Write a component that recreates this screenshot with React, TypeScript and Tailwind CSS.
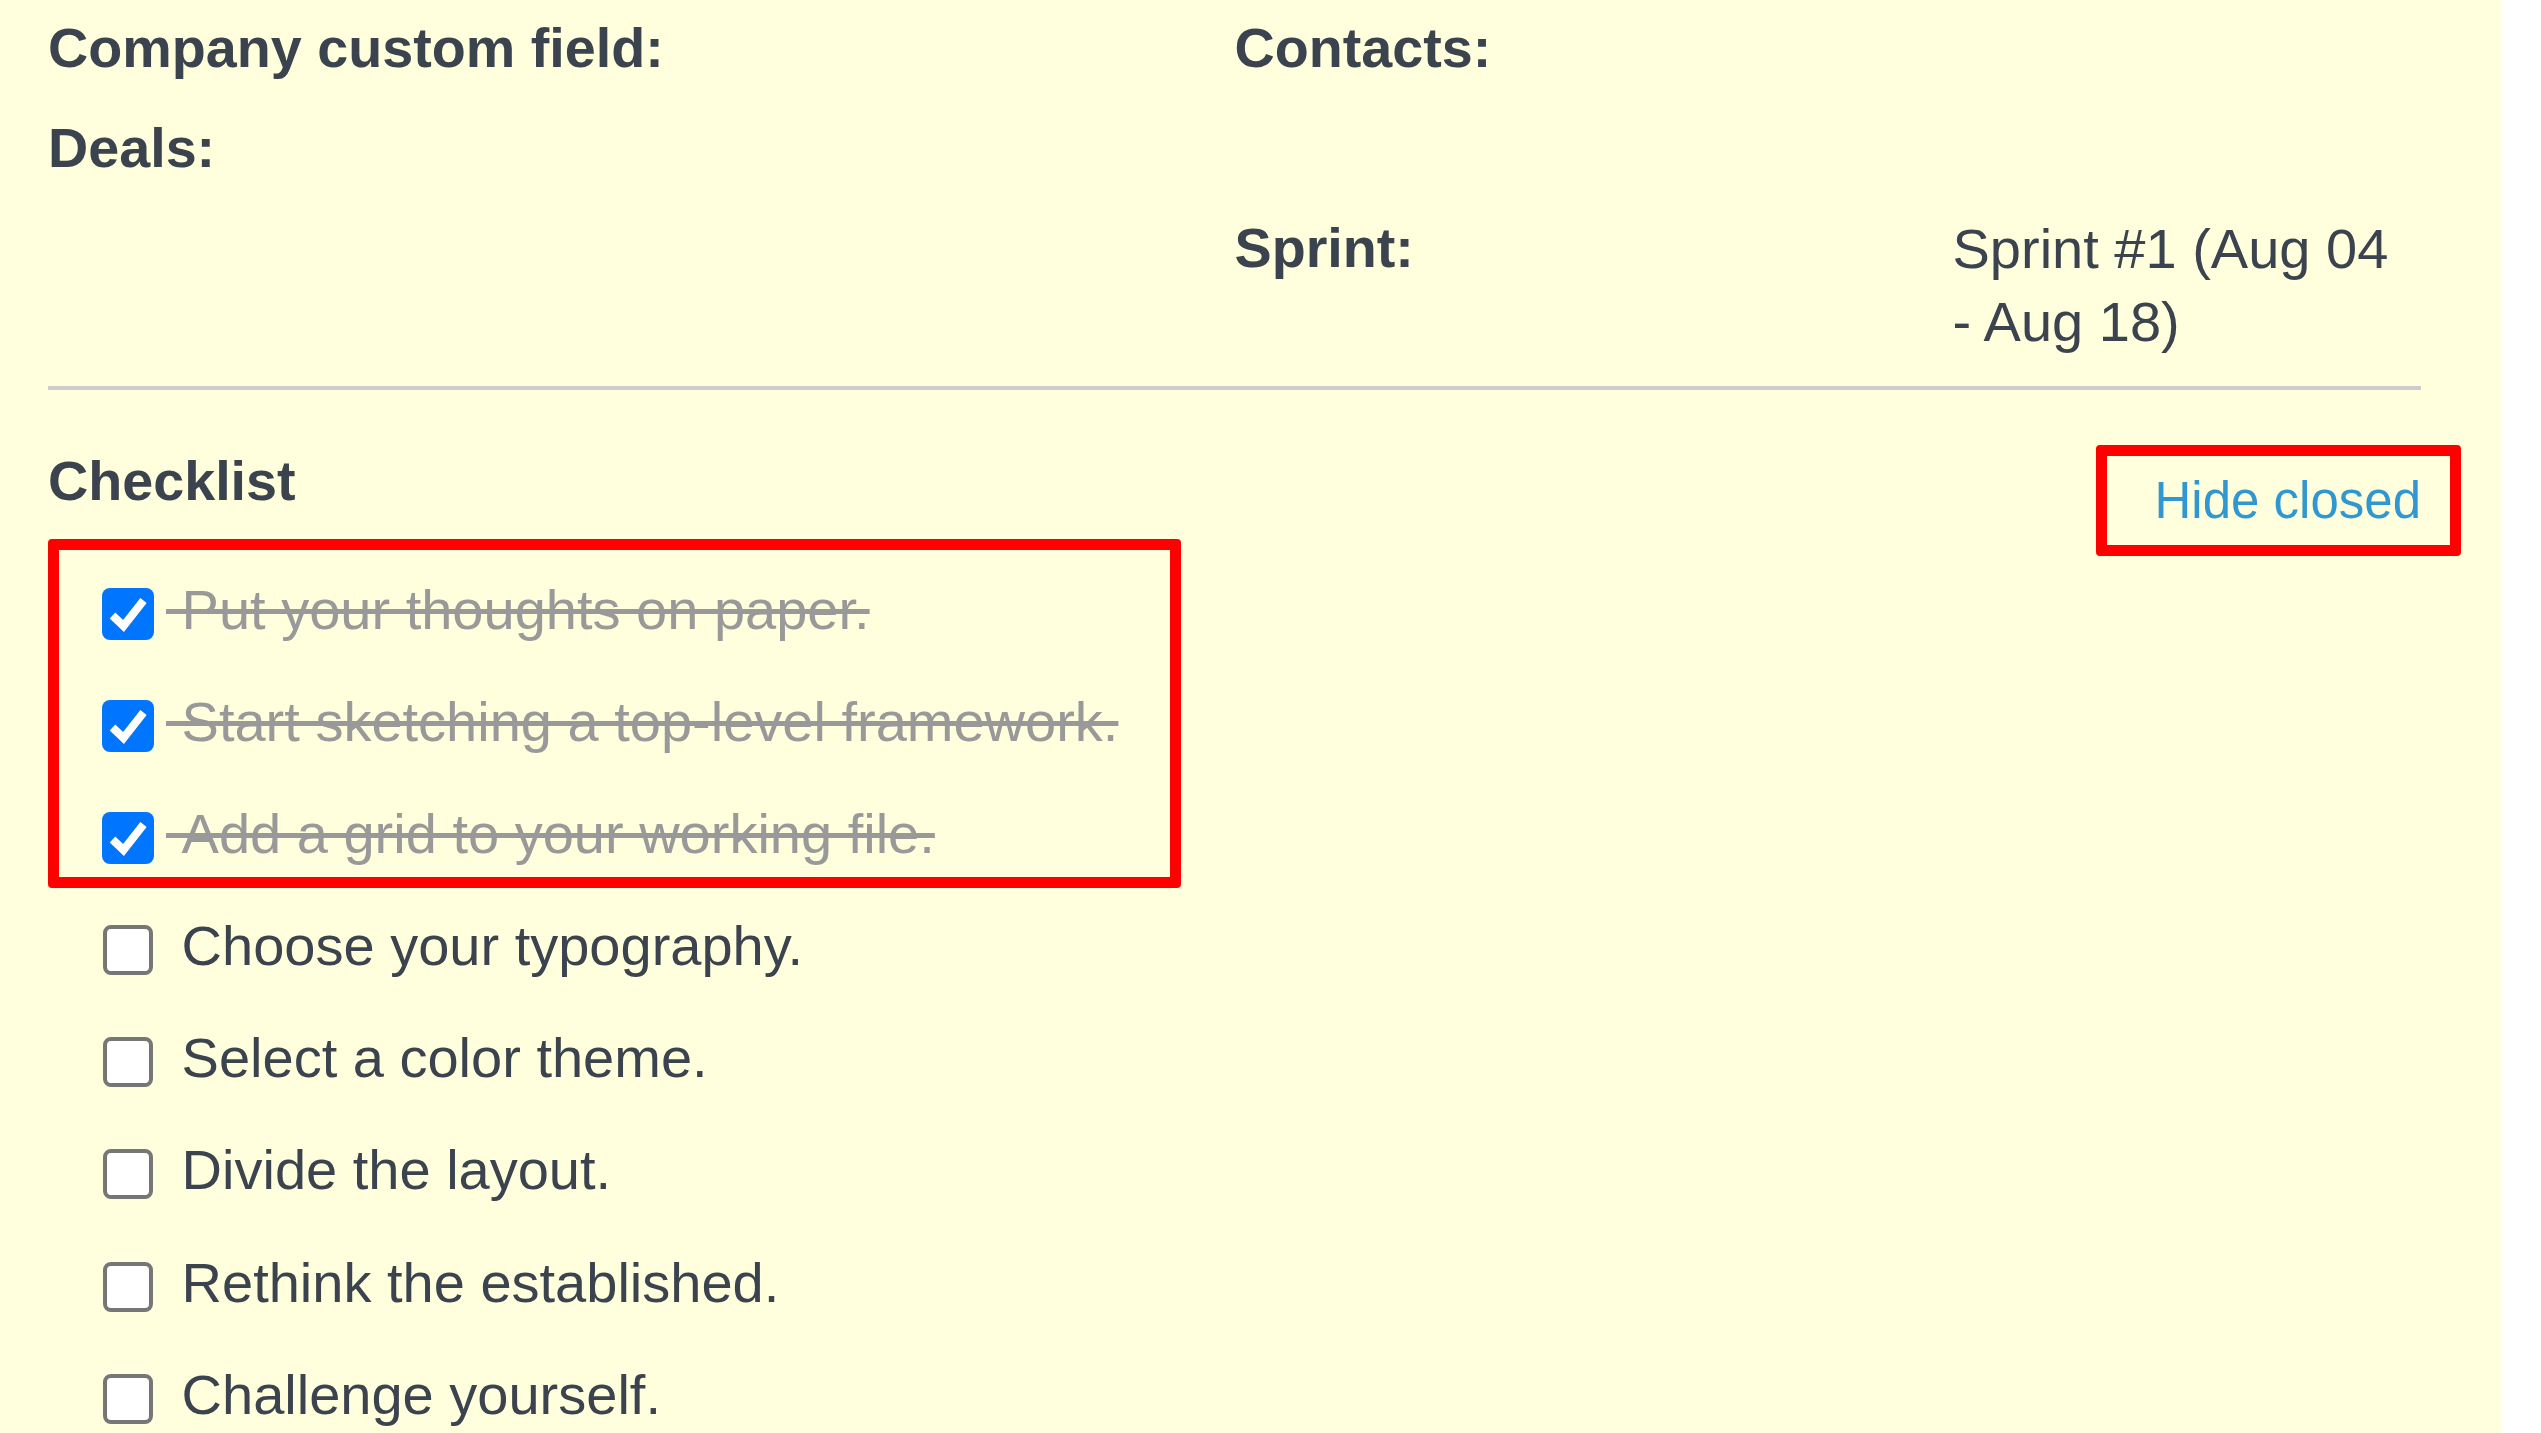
import React from "react";

const checked = [
  "Put your thoughts on paper.",
  "Start sketching a top-level framework.",
  "Add a grid to your working file.",
];
const unchecked = [
  "Choose your typography.",
  "Select a color theme.",
  "Divide the layout.",
  "Rethink the established.",
  "Challenge yourself.",
];

function CheckedBox() {
  return (
    <div className="mt-[15px] h-[52px] w-[52px] shrink-0 rounded-[8px] bg-[#0075ff]">
      <svg viewBox="0 0 52 52" width="52" height="52">
        <path d="M10.5 27.5 L21.5 38 L41.5 12.5" fill="none" stroke="#ffffff" strokeWidth="8" />
      </svg>
    </div>
  );
}

function EmptyBox() {
  return (
    <div className="ml-[1px] mr-[1px] mt-[16px] h-[50px] w-[50px] shrink-0 rounded-[8px] border-[4px] border-[#767676] bg-white" />
  );
}

export default function App() {
  return (
    <div className="min-h-screen bg-white">
      <div className="min-h-[1433px] w-[2501px] bg-[#ffffdd] pl-[48px] pt-[12px] font-['Liberation_Sans',Arial,sans-serif] text-[56px] leading-[73px] text-[#3b444e]">
        <div className="w-[2373px]">
          <div className="grid grid-cols-2 gap-y-[27px]">
            <div className="text-[55.7px] font-bold">Company custom field:</div>
            <div className="text-[55.7px] font-bold">Contacts:</div>
            <div className="text-[55.7px] font-bold">Deals:</div>
            <div />
            <div />
            <div className="flex">
              <div className="w-[718px] shrink-0 text-[55.7px] font-bold">Sprint:</div>
              <div className="w-[445px]">Sprint #1 (Aug 04 - Aug 18)</div>
            </div>
          </div>

          <div className="mt-[28px] h-[4px] bg-[#cccccc]" />

          <div className="mt-[55px] flex items-start justify-between">
            <div className="text-[55.7px] font-bold">Checklist</div>
            <div className="relative mt-[23px] text-[51px] leading-[66px] text-[#3097d1]">
              Hide closed
              <div className="pointer-events-none absolute -top-[23px] -bottom-[22px] -left-[59px] -right-[40px] rounded-[4px] border-[11px] border-[#ff0000]" />
            </div>
          </div>

          <div className="relative mt-[39px] flex flex-col gap-[39.1px] pl-[54px]">
            <div className="pointer-events-none absolute left-0 top-[-34px] h-[349px] w-[1133px] rounded-[4px] border-[11px] border-[#ff0000]" />
            {checked.map((t) => (
              <div key={t} className="flex items-start">
                <CheckedBox />
                <div className="ml-[12px] text-[#999999] line-through">{"\u00a0" + t}</div>
              </div>
            ))}
            {unchecked.map((t) => (
              <div key={t} className="flex items-start">
                <EmptyBox />
                <div className="ml-[12px]">{"\u00a0" + t}</div>
              </div>
            ))}
          </div>
        </div>
      </div>
    </div>
  );
}
